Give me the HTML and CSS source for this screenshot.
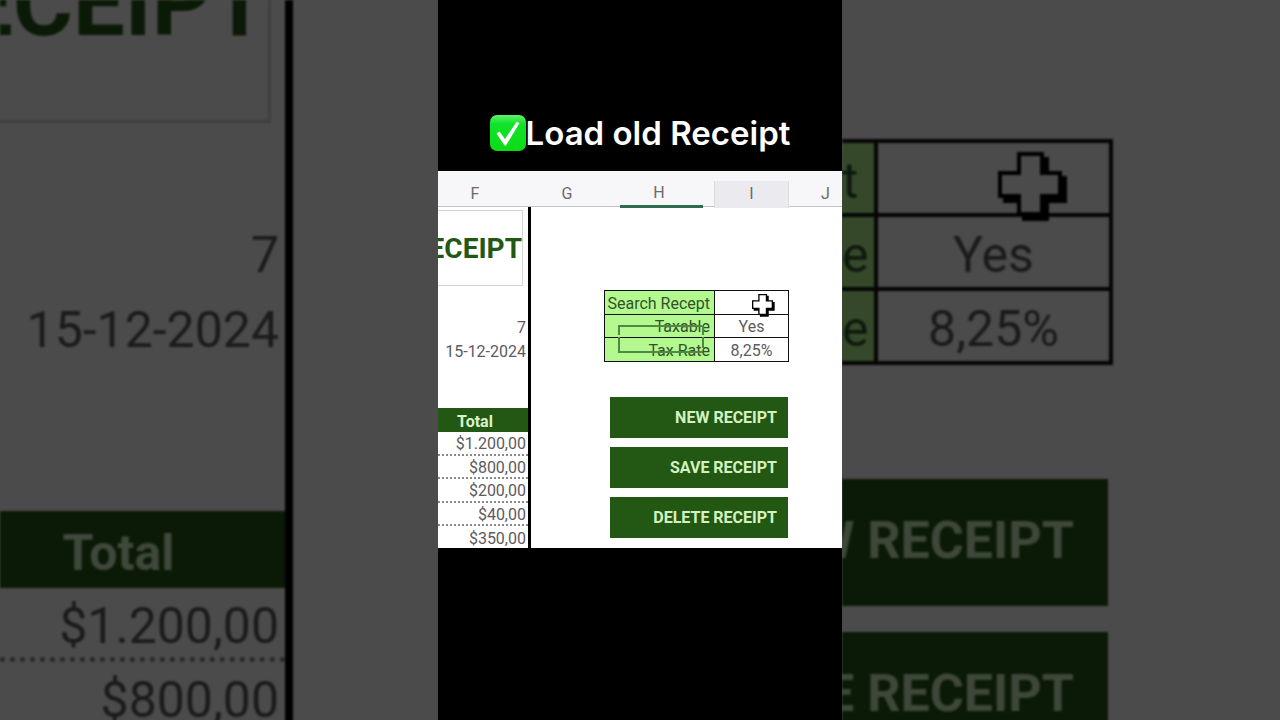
FILE: index.html
```html
<!DOCTYPE html>
<html lang="en">
<head>
    <meta charset="utf-8">
    <title>Load old Receipt</title>
    <link rel="stylesheet" href="styles.css">
</head>
<body>
    <div class="stage">
        <!-- enlarged, dimmed sheet on the left -->
        <div class="side side-left" aria-hidden="true">
            <div class="dim">
                <div class="invoice">
                    <div class="title-box">ECEIPT</div>
                    <div class="meta">
                        <div>7</div>
                        <div>15-12-2024</div>
                    </div>
                    <table class="totals">
                        <tr><th>Total</th></tr>
                        <tr><td>$1.200,00</td></tr>
                        <tr><td>$800,00</td></tr>
                    </table>
                </div>
            </div>
        </div>

        <main class="video">
            <h1 class="caption">
                <svg class="check" viewBox="0 0 36 36">
                    <defs>
                        <linearGradient id="tick" x1="0" y1="0" x2="0" y2="1">
                            <stop offset="0" stop-color="#5ff36a"/>
                            <stop offset="0.25" stop-color="#10e32a"/>
                            <stop offset="1" stop-color="#0bdc14"/>
                        </linearGradient>
                    </defs>
                    <rect width="36" height="36" rx="7" fill="url(#tick)"/>
                    <path d="M6.500 18.500L9.500 16.500L15 24L26.500 7L29.500 8L16 30.500H14.500Z" fill="#fff"/>
                </svg>
                <span>Load old Receipt</span>
            </h1>
            <div class="sheet">
                <div class="columns">
                    <span class="first">F</span>
                    <span>G</span>
                    <span class="marked">H</span>
                    <span class="active">I</span>
                    <span class="last">J</span>
                </div>
                <div class="cells">
                    <div class="invoice">
                        <div class="title-box">ECEIPT</div>
                        <div class="meta">
                            <div>7</div>
                            <div>15-12-2024</div>
                        </div>
                        <table class="totals">
                            <tr><th>Total</th></tr>
                            <tr><td>$1.200,00</td></tr>
                            <tr><td>$800,00</td></tr>
                            <tr><td>$200,00</td></tr>
                            <tr><td>$40,00</td></tr>
                            <tr><td>$350,00</td></tr>
                        </table>
                    </div>
                    <div class="panel">
                        <div class="lookup-wrap">
                            <table class="lookup">
                                <tr><th>Search Recept</th><td></td></tr>
                                <tr><th>Taxable</th><td>Yes</td></tr>
                                <tr><th>Tax Rate</th><td>8,25%</td></tr>
                            </table>
                            <svg class="trace" viewBox="0 0 88 30">
                                <path d="M85 2H2V28H85M86 3V24" fill="none" stroke="#4f8a45" stroke-width="2"/>
                                <path d="M0 12H6M80 12H87" stroke="#b4f596" stroke-width="2"/>
                            </svg>
                            <svg class="cursor" viewBox="0 0 70 70">
                                <path d="M24 5H51V24H69V51H51V69H24V51H5V24H24Z" fill="#000"/>
                                <path d="M21 2H44V21H62V44H44V62H21V44H2V21H21Z" fill="#fff" stroke="#000" stroke-width="4"/>
                            </svg>
                        </div>
                        <div class="actions">
                            <button type="button">NEW RECEIPT</button>
                            <button type="button">SAVE RECEIPT</button>
                            <button type="button">DELETE RECEIPT</button>
                        </div>
                    </div>
                </div>
            </div>
        </main>

        <!-- enlarged, dimmed sheet on the right -->
        <div class="side side-right" aria-hidden="true">
            <div class="dim">
                <div class="lookup-wrap">
                    <table class="lookup">
                        <tr><th>t</th><td></td></tr>
                        <tr><th>e</th><td>Yes</td></tr>
                        <tr><th>e</th><td>8,25%</td></tr>
                    </table>
                    <svg class="cursor" viewBox="0 0 70 70">
                        <path d="M24 5H51V24H69V51H51V69H24V51H5V24H24Z" fill="#000"/>
                        <path d="M21 2H44V21H62V44H44V62H21V44H2V21H21Z" fill="#fff" stroke="#000" stroke-width="4"/>
                    </svg>
                </div>
                <div class="actions">
                    <button type="button" tabindex="-1"><span>W RECEIPT</span></button>
                    <button type="button" tabindex="-1"><span>E RECEIPT</span></button>
                </div>
            </div>
        </div>
    </div>
</body>
</html>
```

FILE: styles.css
```css
* {
    box-sizing: border-box;
}
body {
    margin: 0;
    background: #000;
    font-family: Roboto, "Liberation Sans", sans-serif;
    font-size: 16px;
    color: #5c5a5e;
    overflow: hidden;
}
.stage {
    display: grid;
    grid-template-columns: 1fr 404px 1fr;
    height: 100vh;
}
table {
    border-spacing: 0;
}
th, td {
    padding: 0;
}

/* caption */
.video {
    background: #000;
    min-width: 0;
}
.caption {
    display: flex;
    align-items: center;
    justify-content: center;
    height: 171px;
    margin: 0;
    padding-top: 95px;
    color: #fff;
    font-family: Inter, sans-serif;
    font-size: 33px;
    font-weight: 600;
    white-space: nowrap;
}
.check {
    width: 36px;
    height: 36px;
}

/* spreadsheet */
.sheet {
    height: 377px;
    background: #fff;
    overflow: hidden;
}
.columns {
    display: grid;
    grid-template-columns: 92px 74px 110px 75px 1fr;
    height: 36px;
    padding-top: 10px;
    background: #f7f6f9;
    border-bottom: 1px solid #c4c4c6;
    line-height: 25px;
    text-align: center;
    color: #6b6a6d;
}
.columns .first {
    padding-right: 18px;
}
.columns .marked {
    margin: 0 11px 0 16px;
    padding-right: 5px;
    border-bottom: 3px solid #2f6b50;
    line-height: 24px;
}
.columns .active {
    background: #ebebef;
    border-left: 1px solid #dcdce0;
    border-right: 1px solid #dcdce0;
}
.columns .last {
    padding-left: 20px;
}
.cells {
    display: grid;
    grid-template-columns: 93px 1fr;
    height: 341px;
}
.invoice {
    display: flex;
    flex-direction: column;
    border-right: 3px solid #000;
    text-align: right;
}
.title-box {
    display: flex;
    align-items: center;
    justify-content: flex-end;
    height: 76px;
    margin: 3px 5px 0 0;
    border: 1px solid #d4d4d4;
    border-left: none;
    color: #235814;
    font-size: 28px;
    font-weight: 700;
    overflow: hidden;
}
.meta {
    margin: 30px 2px 0 0;
    line-height: 24px;
}
.totals {
    width: 100%;
    height: 142px;
    margin-top: 44px;
}
.totals th {
    height: 24px;
    padding: 2px 16px 0 0;
    background: #235814;
    color: #d9f3c9;
    text-align: center;
}
.totals td {
    padding: 2px 2px 0 0;
    border-bottom: 2px dotted #8a888c;
    line-height: 19px;
}
.panel {
    padding: 83px 53px 0 73px;
}
.lookup-wrap {
    position: relative;
}
.lookup {
    width: 185px;
    height: 72px;
    border-collapse: collapse;
    table-layout: fixed;
}
.lookup th, .lookup td {
    padding-top: 2px;
    border: 1px solid #111;
    text-align: center;
}
.lookup th {
    width: 110px;
    padding-right: 4px;
    background: #b3f98f;
    color: #33502c;
    font-weight: 400;
    text-align: right;
    white-space: nowrap;
}
.trace {
    position: absolute;
    left: 13px;
    top: 34px;
    width: 88px;
    height: 30px;
}
.cursor {
    position: absolute;
    right: 14px;
    top: 4px;
    width: 23px;
    height: 23px;
}
.actions {
    display: flex;
    flex-direction: column;
    gap: 9px;
    width: 178px;
    margin: 35px 0 0 6px;
}
.actions button {
    height: 41px;
    padding: 0 11px 0 0;
    border: none;
    background: #235814;
    color: #d3f2c0;
    font-family: Roboto, sans-serif;
    font-size: 16px;
    font-weight: 700;
    text-align: right;
    white-space: nowrap;
}

/* side backdrops: same cells, enlarged */
.side {
    background: #4b4b4b;
    overflow: hidden;
    min-width: 0;
    font-size: 50px;
}
.dim {
    filter: blur(1px) brightness(0.295);
}
.side-left .dim {
    padding-right: 145px;
}
.side-left .invoice {
    border-right-width: 8px;
}
.side-left .title-box {
    align-items: flex-start;
    height: 123px;
    margin: 0 14px 0 0;
    border-width: 0 3px 3px 0;
    font-size: 92px;
    line-height: 8px;
}
.side-left .meta {
    margin: 95px 6px 0 0;
    line-height: 75px;
}
.side-left .totals {
    height: 225px;
    margin-top: 143px;
}
.side-left .totals th {
    height: 77px;
    padding: 7px 48px 0 0;
}
.side-left .totals td {
    padding: 8px 6px 0 0;
    border-bottom-width: 5px;
    line-height: 61px;
}
.side-right .dim {
    padding-top: 139px;
}
.side-right .lookup-wrap {
    width: 271px;
}
.side-right .lookup {
    width: 100%;
    height: 226px;
}
.side-right .lookup th, .side-right .lookup td {
    padding-top: 6px;
    border-width: 4px;
}
.side-right .lookup th {
    width: 34px;
    padding-right: 16px;
    border-left: none;
}
.side-right .cursor {
    right: 45px;
    top: 13px;
    width: 70px;
    height: 70px;
}
.side-right .actions {
    gap: 26px;
    width: 266px;
    margin: 114px 0 0;
}
.side-right .actions button {
    display: flex;
    align-items: center;
    justify-content: flex-end;
    height: 127px;
    padding: 0 34px 4px 0;
    font-size: 52px;
    overflow: hidden;
}
```
